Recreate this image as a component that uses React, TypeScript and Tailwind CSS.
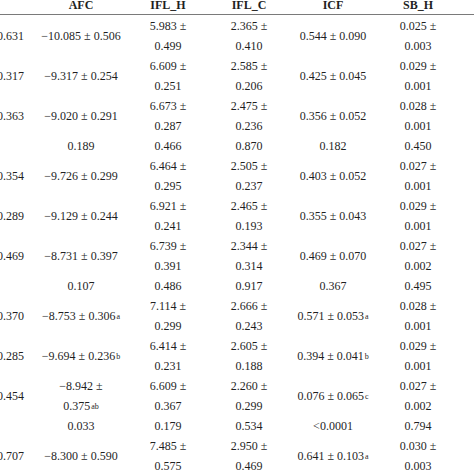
type Cell = string[];
type Row = { lead: string; cells: Cell[]; p?: boolean };

const cols = "grid grid-cols-[34px_94px_80px_82px_86px_84px_1fr]";

const Sup = ({ t }: { t: string }) => (
  <sup className="text-[8px] leading-none relative -top-[1px] ml-[1px]">{t}</sup>
);

// "0.306^a" -> text + superscript
const renderLine = (s: string) => {
  const [main, sup] = s.split("^");
  return (
    <>
      {main}
      {sup && <Sup t={sup} />}
    </>
  );
};

const rows: Row[] = [
  { lead: "0.631", cells: [["−10.085 ± 0.506"], ["5.983 ±", "0.499"], ["2.365 ±", "0.410"], ["0.544 ± 0.090"], ["0.025 ±", "0.003"]] },
  { lead: "0.317", cells: [["−9.317 ± 0.254"], ["6.609 ±", "0.251"], ["2.585 ±", "0.206"], ["0.425 ± 0.045"], ["0.029 ±", "0.001"]] },
  { lead: "0.363", cells: [["−9.020 ± 0.291"], ["6.673 ±", "0.287"], ["2.475 ±", "0.236"], ["0.356 ± 0.052"], ["0.028 ±", "0.001"]] },
  { lead: "", p: true, cells: [["0.189"], ["0.466"], ["0.870"], ["0.182"], ["0.450"]] },
  { lead: "0.354", cells: [["−9.726 ± 0.299"], ["6.464 ±", "0.295"], ["2.505 ±", "0.237"], ["0.403 ± 0.052"], ["0.027 ±", "0.001"]] },
  { lead: "0.289", cells: [["−9.129 ± 0.244"], ["6.921 ±", "0.241"], ["2.465 ±", "0.193"], ["0.355 ± 0.043"], ["0.029 ±", "0.001"]] },
  { lead: "0.469", cells: [["−8.731 ± 0.397"], ["6.739 ±", "0.391"], ["2.344 ±", "0.314"], ["0.469 ± 0.070"], ["0.027 ±", "0.002"]] },
  { lead: "", p: true, cells: [["0.107"], ["0.486"], ["0.917"], ["0.367"], ["0.495"]] },
  { lead: "0.370", cells: [["−8.753 ± 0.306^a"], ["7.114 ±", "0.299"], ["2.666 ±", "0.243"], ["0.571 ± 0.053^a"], ["0.028 ±", "0.001"]] },
  { lead: "0.285", cells: [["−9.694 ± 0.236^b"], ["6.414 ±", "0.231"], ["2.605 ±", "0.188"], ["0.394 ± 0.041^b"], ["0.029 ±", "0.001"]] },
  { lead: "0.454", cells: [["−8.942 ±", "0.375^ab"], ["6.609 ±", "0.367"], ["2.260 ±", "0.299"], ["0.076 ± 0.065^c"], ["0.027 ±", "0.002"]] },
  { lead: "", p: true, cells: [["0.033"], ["0.179"], ["0.534"], ["<0.0001"], ["0.794"]] },
  { lead: "0.707", cells: [["−8.300 ± 0.590"], ["7.485 ±", "0.575"], ["2.950 ±", "0.469"], ["0.641 ± 0.103^a"], ["0.030 ±", "0.003"]] },
];

const headers = ["AFC", "IFL_H", "IFL_C", "ICF", "SB_H"];

export default function App() {
  return (
    <div className="w-[474px] h-[474px] overflow-hidden bg-white text-[#1f1f1f] text-[12px] leading-[20px] font-['Liberation_Serif',serif]">
      <div className="-mt-[5px]">
        <div className={`${cols} h-[20px] border-b border-[#7a7a7a] font-bold`}>
          <div />
          {headers.map((h) => (
            <div key={h} className="text-center whitespace-nowrap">
              {h}
            </div>
          ))}
          <div />
        </div>
        <div className="pt-[1px]">
          {rows.map((r, i) => (
            <div key={i} className={`${cols} ${r.p ? "h-[20px]" : "h-[40px]"}`}>
              {/* first column is cut off by the crop: text runs out to the left */}
              <div className="min-w-0 overflow-hidden flex items-center justify-end pr-[10px] whitespace-nowrap">
                <span className="shrink-0">{r.lead}</span>
              </div>
              {r.cells.map((c, j) => (
                <div key={j} className="flex flex-col items-center justify-center whitespace-nowrap">
                  {c.map((l, k) => (
                    <span key={k}>{renderLine(l)}</span>
                  ))}
                </div>
              ))}
              <div />
            </div>
          ))}
        </div>
      </div>
    </div>
  );
}
